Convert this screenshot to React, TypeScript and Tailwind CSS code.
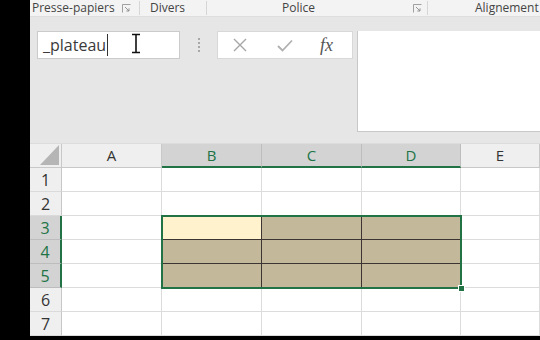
import React from "react";

const font = { fontFamily: '"Segoe UI", "Open Sans", "Noto Sans", sans-serif' };

const cols = ["A", "B", "C", "D", "E"];
const colW = ["w-[100px]", "w-[100px]", "w-[100px]", "w-[99px]", "flex-1"];
const selCols = ["B", "C", "D"];
const selRows = [3, 4, 5];

function Launcher() {
  return (
    <svg width="9" height="9" viewBox="0 0 9 9" className="text-[#8a8a8a]">
      <path d="M0.5 8.5V0.5h8" fill="none" stroke="currentColor" strokeWidth="0.8" />
      <path d="M3 3l4 4M7 4.3V7H4.3" fill="none" stroke="currentColor" strokeWidth="0.9" />
    </svg>
  );
}

function Ribbon() {
  return (
    <div className="h-[17px] bg-[#f3f3f3] border-b border-[#dedede] flex items-center text-[12px] text-[#444] leading-none whitespace-nowrap overflow-hidden">
      <div className="w-[109px] flex items-center pl-[2px]">
        <span>Presse-papiers</span>
        <span className="ml-auto mr-[8px] mt-[1px]"><Launcher /></span>
      </div>
      <div className="w-px h-[14px] bg-[#d6d6d6]" />
      <div className="w-[66px] flex items-center pl-[10px]">Divers</div>
      <div className="w-px h-[14px] bg-[#d6d6d6]" />
      <div className="w-[220px] flex items-center">
        <span className="ml-[75px]">Police</span>
        <span className="ml-auto mr-[5px] mt-[1px]"><Launcher /></span>
      </div>
      <div className="w-px h-[14px] bg-[#d6d6d6]" />
      <div className="flex-1 flex items-center pl-[47px]">Alignement</div>
    </div>
  );
}

function FormulaArea() {
  return (
    <div className="h-[127px] bg-[#e6e6e6] flex items-start pt-[14px] pl-[7px] border-b border-[#dcdcdc]">
      <div className="relative w-[143px] h-[28px] bg-white border border-[#cbcbcb] flex items-center pl-[5px]">
        <span className="text-[16px] text-[#3a3a3a] leading-none">_plateau</span>
        <span className="w-px h-[22px] bg-[#333] ml-[1px]" />
        <svg className="absolute left-[92px] top-[1px]" width="12" height="21" viewBox="0 0 12 21">
          <path d="M2 1.5h3.2M6.8 1.5H10M6 1.5v18M2 19.5h3.2M6.8 19.5H10M5.2 1.5h1.6M5.2 19.5h1.6" stroke="#111" strokeWidth="1.6" fill="none" />
        </svg>
      </div>
      <div className="w-[37px] h-[28px] flex flex-col items-center justify-center gap-[2px]">
        <span className="w-[2px] h-[2px] bg-[#a8a8a8]" />
        <span className="w-[2px] h-[2px] bg-[#a8a8a8]" />
        <span className="w-[2px] h-[2px] bg-[#a8a8a8]" />
        <span className="w-[2px] h-[2px] bg-[#a8a8a8]" />
      </div>
      <div className="w-[136px] h-[28px] bg-white border border-[#d8d8d8] flex items-center">
        <svg className="ml-[15px]" width="14" height="14" viewBox="0 0 14 14">
          <path d="M1 1l12 12M13 1L1 13" stroke="#a6a6a6" strokeWidth="1.4" />
        </svg>
        <svg className="ml-[30px]" width="16" height="13" viewBox="0 0 16 13">
          <path d="M1 7l4.5 4.5L15 1.5" stroke="#b0b0b0" strokeWidth="1.8" fill="none" />
        </svg>
        <span className="ml-[27px] text-[18px] italic text-[#555] leading-none" style={{ fontFamily: '"Liberation Serif", "DejaVu Serif", serif' }}>
          fx
        </span>
      </div>
      <div className="ml-[4px] flex-1 h-[101px] bg-white border-l border-b border-[#c8c8c8]" />
    </div>
  );
}

function Grid() {
  const rows = [1, 2, 3, 4, 5, 6, 7];
  return (
    <div className="relative bg-white">
      <div className="h-[24px] flex bg-[#efefef]">
        <div className="w-[32px] h-full border-r border-b border-[#c8c8c8] flex items-end justify-end pr-[2px] pb-[2px]">
          <svg width="19" height="20" viewBox="0 0 19 20">
            <path d="M19 0V20H0Z" fill="#b5b5b5" />
          </svg>
        </div>
        {cols.map((c, i) => {
          const sel = selCols.includes(c);
          return (
            <div
              key={c}
              className={`${colW[i]} h-full flex items-center justify-center text-[15px] border-r ${
                sel
                  ? "bg-[#d3d3d3] text-[#217346] border-b-2 border-b-[#217346] border-r-[#bdbdbd]"
                  : "text-[#333] border-b border-[#c8c8c8]"
              }`}
            >
              {c}
            </div>
          );
        })}
      </div>
      {rows.map((r) => {
        const sel = selRows.includes(r);
        return (
          <div key={r} className="h-[24px] flex">
            <div
              className={`w-[32px] h-full flex items-center justify-center text-[16px] border-b ${
                sel
                  ? "bg-[#d3d3d3] text-[#217346] border-r-2 border-r-[#217346] border-b-[#bdbdbd]"
                  : "bg-[#efefef] text-[#333] border-r border-[#c8c8c8] border-b-[#dadada]"
              }`}
            >
              {r}
            </div>
            {cols.map((c, i) => {
              const inSel = sel && selCols.includes(c);
              const bg = inSel ? (c === "B" && r === 3 ? "bg-[#fff2cc]" : "bg-[#c4b89b]") : "bg-white";
              return (
                <div
                  key={c}
                  className={`${colW[i]} h-full border-r border-b ${
                    inSel ? "border-[#3d3434]" : "border-[#dcdcdc]"
                  } ${bg}`}
                />
              );
            })}
          </div>
        );
      })}
      <div className="absolute left-[131px] top-[71px] w-[301px] h-[74px] border-2 border-[#217346] pointer-events-none" />
      <div className="absolute left-[428px] top-[141px] w-[7px] h-[7px] bg-[#217346] border border-white" />
    </div>
  );
}

export default function App() {
  return (
    <div className="w-[540px] h-[340px] overflow-hidden flex bg-black" style={font}>
      <div className="w-[30px] shrink-0 bg-black" />
      <div className="flex-1 flex flex-col overflow-hidden">
        <Ribbon />
        <FormulaArea />
        <Grid />
      </div>
    </div>
  );
}
